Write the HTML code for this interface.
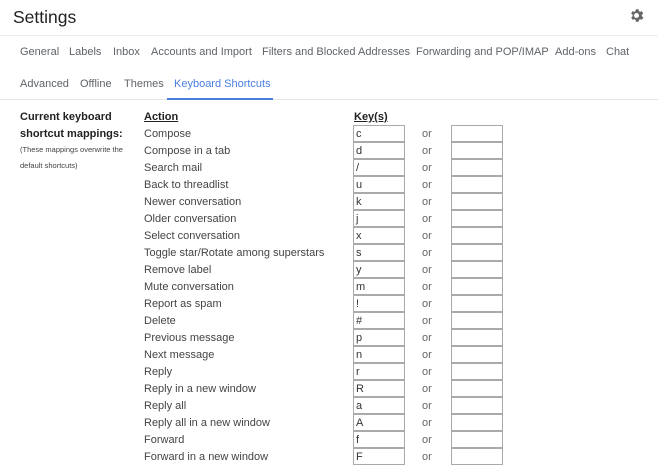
<!DOCTYPE html>
<html><head><style>
*{margin:0;padding:0;box-sizing:border-box}
body{width:658px;height:457px;overflow:hidden;background:#fff;font-family:"Liberation Sans",Arial,sans-serif;color:#222;position:relative}
.a{position:absolute;white-space:nowrap}
.t{font-size:11px;color:#444;line-height:13px}
.tab{font-size:11px;color:#5f6368;position:absolute;white-space:nowrap;line-height:13px}
.box{position:absolute;width:52px;height:17px;border:1px solid #aaa;font-size:11px;padding-left:2px;padding-top:2px;line-height:13px;color:#333}
</style></head><body>
<div class="a" style="left:13px;top:7px;font-size:17.5px;color:#222">Settings</div>
<svg class="a" style="left:628px;top:7px" width="17" height="17" viewBox="0 0 24 24"><path fill="#666" d="M19.4 13a7.5 7.5 0 000-2l2.1-1.6-2-3.5-2.5 1a7 7 0 00-1.7-1L15 3.2h-4l-.4 2.7a7 7 0 00-1.7 1l-2.5-1-2 3.5L6.6 11a7.5 7.5 0 000 2l-2.1 1.6 2 3.5 2.5-1a7 7 0 001.7 1l.4 2.7h4l.4-2.7a7 7 0 001.7-1l2.5 1 2-3.5zM12 15.5a3.5 3.5 0 110-7 3.5 3.5 0 010 7z"/></svg>
<div class="a" style="left:0;top:35px;width:658px;height:1px;background:#eee"></div>
<div class="tab" style="left:20px;top:46px">General</div>
<div class="tab" style="left:69px;top:46px">Labels</div>
<div class="tab" style="left:113px;top:46px">Inbox</div>
<div class="tab" style="left:151px;top:46px">Accounts and Import</div>
<div class="tab" style="left:262px;top:46px">Filters and Blocked Addresses</div>
<div class="tab" style="left:416px;top:46px">Forwarding and POP/IMAP</div>
<div class="tab" style="left:555px;top:46px">Add-ons</div>
<div class="tab" style="left:606px;top:46px">Chat</div>
<div class="tab" style="left:20px;top:78px">Advanced</div>
<div class="tab" style="left:80px;top:78px">Offline</div>
<div class="tab" style="left:124px;top:78px">Themes</div>
<div class="tab" style="left:174px;top:78px;color:#4a7fe0">Keyboard Shortcuts</div>
<div class="a" style="left:0;top:99px;width:658px;height:1px;background:#e6e6e6"></div>
<div class="a" style="left:167px;top:98px;width:106px;height:2px;background:#4a7fe0"></div>
<div class="a" style="left:20px;top:109px;font-size:11px;font-weight:bold;line-height:17px;color:#222">Current keyboard<br>shortcut mappings:</div>
<div class="a" style="left:20px;top:142px;font-size:7.5px;line-height:16px;color:#444">(These mappings overwrite the<br>default shortcuts)</div>
<div class="a" style="left:144px;top:111px;font-size:11px;font-weight:bold;text-decoration:underline">Action</div>
<div class="a" style="left:354px;top:111px;font-size:11px;font-weight:bold;text-decoration:underline">Key(s)</div>
<div id="rows"></div>
<script>
var r=[["Compose","c"],["Compose in a tab","d"],["Search mail","/"],["Back to threadlist","u"],["Newer conversation","k"],["Older conversation","j"],["Select conversation","x"],["Toggle star/Rotate among superstars","s"],["Remove label","y"],["Mute conversation","m"],["Report as spam","!"],["Delete","#"],["Previous message","p"],["Next message","n"],["Reply","r"],["Reply in a new window","R"],["Reply all","a"],["Reply all in a new window","A"],["Forward","f"],["Forward in a new window","F"]];
var h="";r.forEach(function(e,i){var y=125+17*i;
h+='<div class="a t" style="left:144px;top:'+(y+3)+'px">'+e[0]+'</div><div class="box" style="left:353px;top:'+y+'px">'+e[1]+'</div><div class="a t" style="left:422px;top:'+(y+3)+'px;color:#666">or</div><div class="box" style="left:451px;top:'+y+'px"></div>';});
document.getElementById("rows").outerHTML=h;
</script>
</body></html>
